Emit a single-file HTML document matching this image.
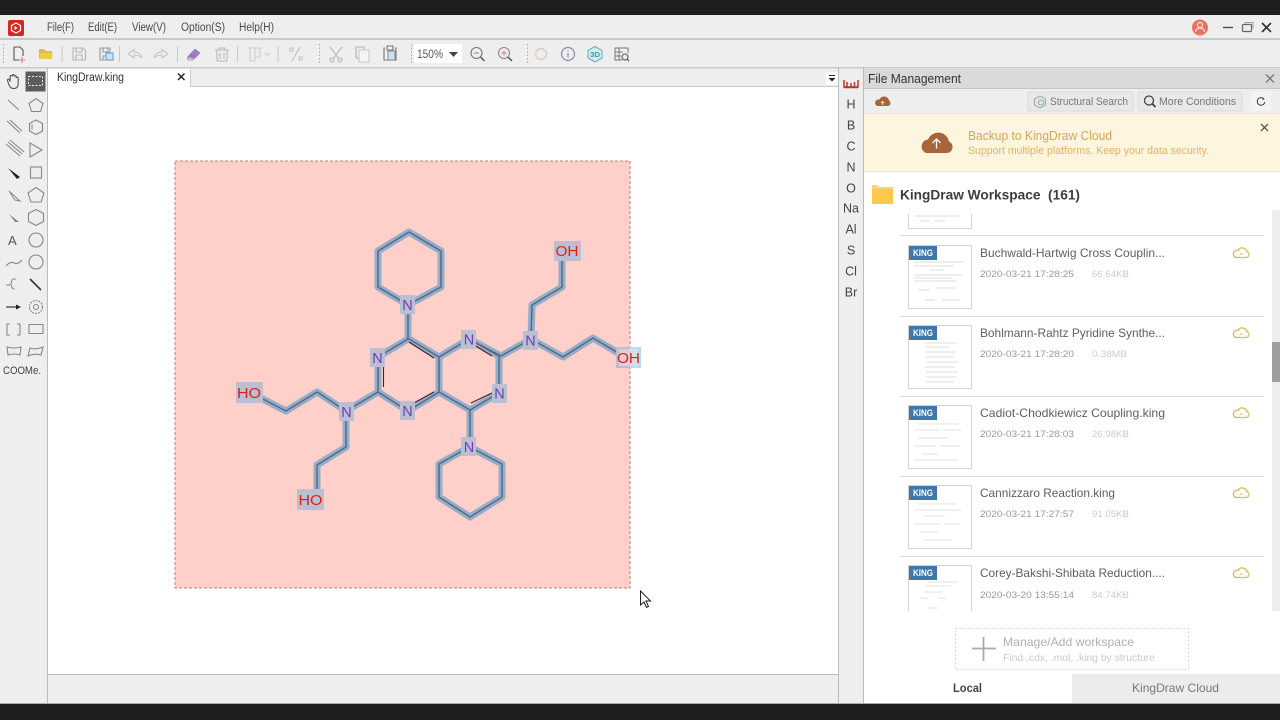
<!DOCTYPE html>
<html lang="en">
<head>
<meta charset="utf-8">
<title>KingDraw</title>
<style>
html,body{margin:0;padding:0;width:1280px;height:720px;overflow:hidden;background:#1e1e1e}
svg{display:block;filter:blur(.35px)}
text{font-family:"Liberation Sans","Noto Sans CJK SC",sans-serif;fill:#444}
.m{font-size:11.5px;fill:#4a4a4a}
.e{font-size:12.5px;fill:#444;text-anchor:middle}
.n{font-size:12px;fill:#5e5e5e}
.d{font-size:9.5px;fill:#999}
.s{font-size:9.5px;fill:#ccc}
.k{font-size:9px;fill:#fff;font-weight:bold}
.ic{fill:none;stroke:#888;stroke-width:1.1}
.ib{fill:none;stroke:#b5b5b5;stroke-width:1.1}
.h1{fill:none;stroke:#93aecb;stroke-width:7;stroke-linecap:round;stroke-linejoin:round}
.b1{fill:none;stroke:#5a687e;stroke-width:1.5;stroke-linecap:round;stroke-linejoin:round}
.lb{fill:#bcbfd2}
.N{font-size:14.5px;fill:#6a3fb0;text-anchor:middle}
.O{font-size:15px;fill:#e0201a;text-anchor:middle}
</style>
</head>
<body>
<svg width="1280" height="720" viewBox="0 0 1280 720" xmlns="http://www.w3.org/2000/svg">
<defs>
<clipPath id="lc"><rect x="864" y="214" width="408" height="397"/></clipPath>
<g id="cl"><path d="M-5 4.500h10a3 3 0 0 0 .8-5.900a4.600 4.600 0 0 0-8.600-1.200a3.600 3.600 0 0 0-2.200 7.100z" fill="none" stroke="#dfb665" stroke-width="1.300"/><path d="M-1.200 1h2.400" stroke="#dfb665" stroke-width="1.200"/></g>
<g id="kg"><rect x=".5" y=".5" width="63" height="63" fill="#fff" stroke="#d2d2d2"/><rect x="1" y="1" width="28" height="14" fill="#3f78a8"/><text x="5" y="11" class="k" textLength="20" lengthAdjust="spacingAndGlyphs">KING</text></g>
</defs>

<!-- frame -->
<rect width="1280" height="720" fill="#1e1e1e"/>
<rect y="15" width="1280" height="689" fill="#eeeeee"/>
<rect y="38" width="1280" height="2" fill="#c9c9c9"/>
<rect y="67" width="1280" height="1.500" fill="#c9c9c9"/>

<!-- logo -->
<rect x="8" y="20" width="16" height="16" rx="2" fill="#d7261e"/>
<path d="M16 23l4.500 2.500v5l-4.500 2.500l-4.500-2.500v-5z" fill="none" stroke="#fff" stroke-width="1.200"/>
<path d="M14.500 26l3 2l-3 2z" fill="#fff"/>

<!-- menu -->
<text x="47" y="31" class="m" textLength="27" lengthAdjust="spacingAndGlyphs">File(F)</text>
<text x="88" y="31" class="m" textLength="29" lengthAdjust="spacingAndGlyphs">Edit(E)</text>
<text x="132" y="31" class="m" textLength="34" lengthAdjust="spacingAndGlyphs">View(V)</text>
<text x="181" y="31" class="m" textLength="44" lengthAdjust="spacingAndGlyphs">Option(S)</text>
<text x="239" y="31" class="m" textLength="35" lengthAdjust="spacingAndGlyphs">Help(H)</text>

<!-- window controls -->
<circle cx="1200" cy="27.500" r="8" fill="#e8735f"/>
<circle cx="1200" cy="25" r="2.500" fill="none" stroke="#fff" stroke-width="1"/>
<path d="M1195.500 32a4.500 4 0 0 1 9 0" fill="none" stroke="#fff" stroke-width="1"/>
<path d="M1223 27.500h10" stroke="#444" stroke-width="1.300"/>
<rect x="1242.500" y="24.500" width="9" height="7" rx="1" fill="none" stroke="#666" stroke-width="1.200"/>
<path d="M1245 24v-1.500h8v6" fill="none" stroke="#888" stroke-width=".8"/>
<path d="M1262 23l9 9M1271 23l-9 9" stroke="#333" stroke-width="1.600"/>

<!-- toolbar -->
<path d="M3.500 44v20M319.500 44v20M411.500 44v20M527.500 44v20" stroke="#aaa" stroke-dasharray="1.500 2"/>
<path d="M62 46v16M119.500 46v16M177.500 46v16M237.500 46v16M278 46v16" stroke="#c8c8c8"/>
<path d="M14 47h6l3 3v6M14 47v13h5" fill="none" stroke="#555" stroke-width="1.100"/>
<path d="M19 60h6M22 57v6" stroke="#e88068" stroke-width="1.100"/>
<path d="M39 49h5l1.500 2h6.500v8h-13z" fill="#e2bc35"/>
<path d="M39 59l1.500-6h12.500l-1.500 6z" fill="#efcb47"/>
<path d="M73 48h10l2.500 2.500v9.500h-12.500z" class="ib"/><path d="M76 48v4h6v-4M76 60v-5h6v5" class="ib"/>
<path d="M100 48h10v5M100 48v12h5M103 48v4h5v-4M103 60v-4h3" fill="none" stroke="#999" stroke-width="1.100"/>
<rect x="106" y="53" width="7" height="7" fill="#cfe2f2" stroke="#4f9bd1"/>
<path d="M128 54l6-4.500v2.500c4 0 7 2 8 6c-2-2.500-4.500-3-8-3v3z" fill="none" stroke="#c4c4c4" stroke-width="1.100"/>
<path d="M168 54l-6-4.500v2.500c-4 0-7 2-8 6c2-2.500 4.500-3 8-3v3z" fill="none" stroke="#c4c4c4" stroke-width="1.100"/>
<path d="M187 57l8-8.500l5.500 4.500l-8 8h-3.500l-2-2z" fill="#9d7cc6"/>
<path d="M187 57l2 4h3.500l2-2z" fill="#cdbbe2"/>
<path d="M215 50h14M219 50v-2h6v2M217 50v11h10v-11M220 53v6M224 53v6" fill="none" stroke="#b8b8b8" stroke-width="1.100"/>
<path d="M248 48h14M250 48v13h5v-13M255 48v9h5v-9" fill="none" stroke="#cdcdcd" stroke-width="1.100"/>
<path d="M265 53l2.500 2.500l2.500-2.500" fill="none" stroke="#cdcdcd"/>
<path d="M300 47l-8 14M290 48h3v3h-3zM299 57h3v3h-3z" fill="none" stroke="#bdbdbd" stroke-width="1"/>
<path d="M330 47l9 12M342 47l-9 12" stroke="#b8b8b8" stroke-width="1.100"/>
<circle cx="332" cy="60" r="2" class="ib"/><circle cx="340" cy="60" r="2" class="ib"/>
<path d="M356 47h8v3M356 47v11h3" class="ib"/><rect x="359" y="50" width="10" height="12" fill="#f4f4f4" stroke="#c8c8c8"/>
<path d="M385 48h-1v12h12v-12h-1M387 46h6v4h-6z" fill="none" stroke="#777" stroke-width="1.100"/>
<rect x="388" y="51" width="7" height="9" fill="#cde2ee" stroke="#777" stroke-width=".8"/>
<rect x="414" y="44" width="48" height="19" fill="#fff"/>
<text x="417" y="58" class="m" textLength="26" lengthAdjust="spacingAndGlyphs" style="fill:#555">150%</text>
<path d="M449 52h9l-4.500 5z" fill="#444"/>
<circle cx="476.500" cy="53" r="5.500" fill="none" stroke="#777" stroke-width="1.100"/><path d="M480.500 57l4 4" stroke="#555" stroke-width="1.400"/><path d="M474 53h5" stroke="#888"/>
<circle cx="504" cy="53" r="5.500" fill="none" stroke="#888" stroke-width="1.100"/><path d="M508 57l4 4" stroke="#555" stroke-width="1.400"/><path d="M501.500 53h5M504 50.500v5" stroke="#c77" stroke-width=".9"/>
<circle cx="541" cy="54" r="5.500" fill="none" stroke="#dcc7d0" stroke-width="1.500"/>
<path d="M541 48.500a5.500 5.500 0 0 1 5.500 5.500" fill="none" stroke="#c2e0bd" stroke-width="1.500"/>
<path d="M536 52a5.500 5.500 0 0 0 3 7.300" fill="none" stroke="#e9dca0" stroke-width="1.500"/>
<circle cx="568" cy="54" r="6.500" fill="none" stroke="#8d86bd" stroke-width="1.200"/><path d="M568 53v4.500M568 50.500v1" stroke="#8d86bd" stroke-width="1.200"/>
<path d="M595 46.500l7 4v7.500l-7 4l-7-4v-7.500z" fill="#d6ebef" stroke="#6fb0c0" stroke-width="1.100"/>
<text x="590" y="57" style="font-size:7px;font-weight:bold;fill:#3f97aa" textLength="10" lengthAdjust="spacingAndGlyphs">3D</text>
<path d="M615 48h13v5M615 48v12h7M619 48v12M615 52h8M615 56h6" fill="none" stroke="#777" stroke-width="1"/>
<circle cx="625" cy="57" r="3" fill="none" stroke="#555" stroke-width="1.100"/><path d="M627 59l2 2" stroke="#555" stroke-width="1.200"/>

<!-- tab row & canvas -->
<rect x="48" y="69" width="790" height="18" fill="#eeeeee"/>
<rect x="48" y="87" width="790" height="587" fill="#ffffff"/>
<rect x="48" y="68.500" width="143" height="19" fill="#ffffff"/>
<path d="M190.500 69v18" stroke="#ccc"/>
<path d="M191 86.500h647" stroke="#ccc"/>
<text x="57" y="81" class="m" textLength="67" lengthAdjust="spacingAndGlyphs" style="fill:#333">KingDraw.king</text>
<path d="M178 73.500l6.500 6.500M184.500 73.500l-6.500 6.500" stroke="#222" stroke-width="1.500"/>
<rect x="826" y="72" width="12" height="13" fill="#fff"/>
<path d="M829 75.500h6" stroke="#222" stroke-width="1"/>
<path d="M828.500 78h7l-3.500 3.500z" fill="#222"/>
<path d="M47.500 68v636" stroke="#bbb"/>
<path d="M48 674.500h790" stroke="#bbb"/>
<path d="M838.500 68v636" stroke="#bbb"/>

<!-- selection -->
<rect x="175" y="161" width="455" height="427" fill="#ffcfc9" stroke="#d9736e" stroke-width="1" stroke-dasharray="3 2"/>

<!-- molecule: highlight -->
<g class="h1">
<path d="M409 232L441 251V287L408 305L378 287V251Z"/>
<path d="M408 305V339L378 357V392L408 411L439 392V357L409 339M439 392L470 410L499 393V356L469 339L439 357"/>
<path d="M469 339L501 356L531 339L532 305L562 287V255M531 339L563 357L593 338L625 357"/>
<path d="M378 392L346 411L317 392L286 411L249 392M346 411V447L317 465V495"/>
<path d="M470 410V447L502 464V497L470 517L439 497V464L469 447"/>
</g>
<!-- molecule: bonds -->
<g class="b1">
<path d="M409 232L441 251V287L408 305L378 287V251Z"/>
<path d="M408 305V339L378 357V392L408 411L439 392V357L409 339M439 392L470 410L499 393V356L469 339L439 357"/>
<path d="M469 339L501 356L531 339L532 305L562 287V255M531 339L563 357L593 338L625 357"/>
<path d="M378 392L346 411L317 392L286 411L249 392M346 411V447L317 465V495"/>
<path d="M470 410V447L502 464V497L470 517L439 497V464L469 447"/>
</g>
<g fill="none" stroke="#4a1f24" stroke-width="1.100">
<path d="M409 342L434 358M383.500 366V387M412 404L434 392M474 345L492 356M471 403L492 393"/>
</g>
<!-- molecule labels -->
<rect x="400" y="295" width="15" height="19" class="lb"/>
<rect x="370" y="348" width="15" height="19" class="lb"/>
<rect x="400" y="401" width="15" height="19" class="lb"/>
<rect x="461" y="330" width="15" height="19" class="lb"/>
<rect x="492" y="384" width="15" height="19" class="lb"/>
<rect x="523" y="331" width="15" height="19" class="lb"/>
<rect x="339" y="402" width="15" height="19" class="lb"/>
<rect x="461" y="437" width="15" height="19" class="lb"/>
<rect x="236" y="382" width="27" height="21" class="lb"/>
<rect x="297" y="489" width="27" height="21" class="lb"/>
<rect x="554" y="241" width="27" height="20" class="lb"/>
<rect x="616" y="347" width="25" height="21" fill="#b5ddf2"/>
<rect x="616" y="347" width="14" height="21" class="lb"/>
<rect x="619" y="349" width="19" height="17" fill="#ffd8d4" opacity=".55"/>
<text x="407.500" y="310" class="N">N</text>
<text x="377.500" y="363" class="N">N</text>
<text x="407.500" y="416" class="N">N</text>
<text x="469" y="344.500" class="N">N</text>
<text x="499.500" y="398.500" class="N">N</text>
<text x="530.500" y="345.500" class="N">N</text>
<text x="346.500" y="417" class="N">N</text>
<text x="469" y="452" class="N">N</text>
<text x="249" y="398" class="O" textLength="24" lengthAdjust="spacingAndGlyphs">HO</text>
<text x="310.500" y="505" class="O" textLength="24" lengthAdjust="spacingAndGlyphs">HO</text>
<text x="567" y="256" class="O" textLength="23" lengthAdjust="spacingAndGlyphs">OH</text>
<text x="628.500" y="363" class="O" textLength="23" lengthAdjust="spacingAndGlyphs">OH</text>

<!-- cursor -->
<path d="M640.500 591v14l3.500-3l2.500 5.500l2-1l-2.500-5.500h4.500z" fill="#fff" stroke="#222" stroke-width="1"/>

<!-- left tools -->
<rect x="25.500" y="71.500" width="20" height="20" fill="#5c5c5c"/>
<rect x="28.500" y="76.500" width="14" height="9" fill="none" stroke="#e6e6e6" stroke-dasharray="2 1.500"/>
<path d="M9 85l-1.500-4.500c-.5-1.500 1.500-2 2-.5l.7 1.500v-5c0-1.300 2-1.300 2 0v-1c0-1.300 2-1.300 2 0v1c0-1.300 2-1.300 2 0v1.500c0-1.300 2-1 2 .2v5.300c0 3-1.500 5-4.500 5c-2.500 0-3.500-1-4.700-3.500z" fill="none" stroke="#555" stroke-width="1.100"/>
<g class="ic">
<path d="M8 100l11 10"/>
<path d="M36 98.500l7 5l-2.500 8h-9l-2.500-8z"/>
<path d="M7 121l13 12M10 120l12 11"/>
<path d="M36 120l6.500 3.500v7.500l-6.500 3.500l-6.500-3.500v-7.500zM32 124.500v5"/>
<path d="M6 144l14 12M8 142l14 12M10 140l14 12"/>
<path d="M30 143l12 7l-12 7z"/>
<rect x="30.500" y="167" width="11" height="11"/>
<path d="M36 187.500l8 5.500l-3 9h-10l-3-9z"/>
<path d="M36 209.500l7.500 4v8l-7.500 4l-7.500-4v-8z"/>
<circle cx="36" cy="240" r="7"/>
<circle cx="36" cy="262" r="7"/>
<path d="M29 324.500h14v9h-14z"/>
<circle cx="36" cy="307" r="6.500" stroke-dasharray="2 1"/>
<circle cx="36" cy="307" r="2.500"/>
<path d="M7 347q7 2 14 0l-1 8q-6-2-12 0z"/>
<path d="M30 348q6 2 13-1l-2 8q-6-2-13 1z"/>
<path d="M10 324h-3v11h3M17 324h3v11h-3"/>
<path d="M6 266q4-5 8-3t8-3"/>
<path d="M6 285h3q2 0 2.500-3t1.500-3h3M11.500 285q0 4 3 4"/>
</g>
<path d="M8 168l12 9l-3 2z" fill="#222"/>
<path d="M9 191l11 10l-5-1z" fill="none" stroke="#888"/>
<path d="M9 214l10 8l-4 0z" fill="#888"/>
<text x="8" y="245" style="font-size:13px;fill:#555">A</text>
<path d="M30 279l11 11" stroke="#333" stroke-width="1.600"/>
<path d="M6 307h10" stroke="#333" stroke-width="1.200"/><path d="M16 304.500l5 2.500l-5 2.500z" fill="#222"/>
<text x="3" y="374" style="font-size:11px;fill:#444" textLength="38" lengthAdjust="spacingAndGlyphs">COOMe.</text>

<!-- element bar -->
<rect x="839" y="69" width="25" height="635" fill="#eeeeee"/>
<path d="M844 80v7h14v-7M847 82v5M851 83v4M854.500 82v5" fill="none" stroke="#b5372f" stroke-width="1.500"/>
<path d="M844 87.500h14" stroke="#b5372f" stroke-width="1.500"/>
<text x="851" y="108.500" class="e">H</text>
<text x="851" y="129.500" class="e">B</text>
<text x="851" y="150.500" class="e">C</text>
<text x="851" y="171.500" class="e">N</text>
<text x="851" y="192.500" class="e">O</text>
<text x="851" y="212.500" class="e">Na</text>
<text x="851" y="233.500" class="e">Al</text>
<text x="851" y="254.500" class="e">S</text>
<text x="851" y="275.500" class="e">Cl</text>
<text x="851" y="296.500" class="e">Br</text>

<!-- right panel -->
<rect x="864" y="69" width="416" height="634" fill="#ffffff"/>
<path d="M863.500 68v636" stroke="#bbb"/>
<rect x="864" y="69" width="416" height="19" fill="#d9d9d9"/>
<path d="M864 88.500h416" stroke="#c4c4c4"/>
<text x="868" y="83" style="font-size:12.500px;fill:#333" textLength="93" lengthAdjust="spacingAndGlyphs">File Management</text>
<path d="M1266 74.500l8 8M1274 74.500l-8 8" stroke="#777" stroke-width="1.300"/>
<rect x="864" y="89" width="416" height="24" fill="#eeeeee"/>
<!-- small cloud -->
<path d="M877 107h11a3 3 0 0 0 1-5.500a5 5 0 0 0-9.500-1a3.500 3.500 0 0 0-2.500 6.500z" fill="#a8653a" transform="translate(0 -1)"/>
<path d="M882.500 105v-3.500M881 103l1.500-1.500l1.500 1.500" fill="none" stroke="#fff" stroke-width=".8"/>
<!-- search buttons -->
<rect x="1028" y="92" width="105" height="19" rx="1" fill="#e8e8e8" stroke="#dcdcdc"/>
<rect x="1138" y="92" width="104" height="19" rx="1" fill="#e8e8e8" stroke="#dcdcdc"/>
<rect x="1251" y="92" width="20" height="19" fill="#f3f3f3"/>
<path d="M1040 96l5.500 3v6l-5.500 3l-5.500-3v-6z" fill="none" stroke="#aaa" stroke-width="1.200"/>
<circle cx="1041" cy="102.500" r="2.500" fill="none" stroke="#7aa" stroke-width="1"/>
<text x="1050" y="105" style="font-size:11px;fill:#777" textLength="78" lengthAdjust="spacingAndGlyphs">Structural Search</text>
<circle cx="1149" cy="100.500" r="4.500" fill="none" stroke="#444" stroke-width="1.300"/>
<path d="M1152.500 104l3 3" stroke="#333" stroke-width="1.600"/>
<text x="1159" y="105" style="font-size:11px;fill:#777" textLength="77" lengthAdjust="spacingAndGlyphs">More Conditions</text>
<path d="M1264 99a3.800 3.800 0 1 0 .8 3" fill="none" stroke="#444" stroke-width="1"/>
<path d="M1263 97.500l1.500 2l-2.200.5z" fill="#444"/>
<!-- banner -->
<rect x="864" y="113" width="416" height="58" fill="#fdf5dd"/>
<path d="M864 113.500h416M864 171.500h416" stroke="#eee5cc"/>
<path d="M926 153h21a6 6 0 0 0 2-11.500a11 11 0 0 0-21-2a7 7 0 0 0-2 13.500z" fill="#a8653a"/>
<path d="M936.500 148.500v-9M932.500 143l4-4l4 4" fill="none" stroke="#fff" stroke-width="1.300"/>
<text x="968" y="140" style="font-size:12.500px;fill:#d8a655" textLength="144" lengthAdjust="spacingAndGlyphs">Backup to KingDraw Cloud</text>
<text x="968" y="154" style="font-size:11px;fill:#e0b366" textLength="241" lengthAdjust="spacingAndGlyphs">Support multiple platforms. Keep your data security.</text>
<path d="M1261 124l7 7M1268 124l-7 7" stroke="#555" stroke-width="1.300"/>
<!-- workspace -->
<path d="M872 185h5.500l1.500 2h14v17h-21z" fill="#fbd375"/>
<path d="M872 189h21v15h-21z" fill="#fdc84e"/>
<text x="900" y="199.500" style="font-size:13.500px;font-weight:bold;fill:#3d3d3d" textLength="180" lengthAdjust="spacingAndGlyphs" xml:space="preserve">KingDraw Workspace  (161)</text>
<!-- scrollbar -->
<rect x="1272" y="210" width="8" height="401" fill="#ededed"/>
<rect x="1272" y="342" width="8" height="40" fill="#9d9d9d"/>

<!-- list -->
<g clip-path="url(#lc)">
<g>
<rect x="908.500" y="165.500" width="63" height="63" fill="#fff" stroke="#d2d2d2"/>
<path d="M915 216h45M920 221h10M935 221h10" stroke="#ddd"/>
<path d="M900 235.500h364" stroke="#dcdcdc"/>
</g>
<!-- item 1 -->
<use href="#kg" x="908" y="245"/>
<path d="M914 262h50M914 266h40M930 270h14M914 275h48M914 278h38M914 281h42M918 290h12M936 288h20M925 300h10M942 300h18" stroke="#dcdcdc" stroke-width=".9"/>
<text x="980" y="257" class="n" textLength="185" lengthAdjust="spacingAndGlyphs">Buchwald-Hartwig Cross Couplin...</text>
<text x="980" y="277" class="d" textLength="94" lengthAdjust="spacingAndGlyphs">2020-03-21 17:28:25</text>
<text x="1092" y="277" class="s" textLength="37" lengthAdjust="spacingAndGlyphs">66.64KB</text>
<use href="#cl" x="1241" y="253"/>
<path d="M900 316.500h364" stroke="#dcdcdc"/>
<!-- item 2 -->
<use href="#kg" x="908" y="325"/>
<path d="M925 343h32M925 347h25M926 352h30M925 357h28M926 362h32M925 367h30M926 372h32M926 377h30M926 382h28" stroke="#dcdcdc" stroke-width="1"/>
<text x="980" y="337" class="n" textLength="185" lengthAdjust="spacingAndGlyphs">Bohlmann-Rahtz Pyridine Synthe...</text>
<text x="980" y="357" class="d" textLength="94" lengthAdjust="spacingAndGlyphs">2020-03-21 17:28:20</text>
<text x="1092" y="357" class="s" textLength="35" lengthAdjust="spacingAndGlyphs">0.38MB</text>
<use href="#cl" x="1241" y="333"/>
<path d="M900 396.500h364" stroke="#dcdcdc"/>
<!-- item 3 -->
<use href="#kg" x="908" y="405"/>
<path d="M918 424h40M915 430h24M943 430h18M918 438h30M914 446h22M940 446h20M922 454h16M914 460h44" stroke="#e2e2e2" stroke-width="1"/>
<text x="980" y="417" class="n" textLength="185" lengthAdjust="spacingAndGlyphs">Cadiot-Chodkiewicz Coupling.king</text>
<text x="980" y="437" class="d" textLength="94" lengthAdjust="spacingAndGlyphs">2020-03-21 17:28:03</text>
<text x="1092" y="437" class="s" textLength="37" lengthAdjust="spacingAndGlyphs">26.98KB</text>
<use href="#cl" x="1241" y="413"/>
<path d="M900 476.500h364" stroke="#dcdcdc"/>
<!-- item 4 -->
<use href="#kg" x="908" y="485"/>
<path d="M918 504h38M915 510h46M925 516h20M914 524h26M944 524h16M920 532h18M924 540h28" stroke="#e2e2e2" stroke-width="1"/>
<text x="980" y="497" class="n" textLength="135" lengthAdjust="spacingAndGlyphs">Cannizzaro Reaction.king</text>
<text x="980" y="517" class="d" textLength="94" lengthAdjust="spacingAndGlyphs">2020-03-21 17:27:57</text>
<text x="1092" y="517" class="s" textLength="37" lengthAdjust="spacingAndGlyphs">91.05KB</text>
<use href="#cl" x="1241" y="493"/>
<path d="M900 556.500h364" stroke="#dcdcdc"/>
<!-- item 5 -->
<use href="#kg" x="908" y="565"/>
<path d="M928 582h30M925 586h26M924 592h18M920 598h8M938 598h8M928 608h10" stroke="#e2e2e2" stroke-width="1"/>
<text x="980" y="577" class="n" textLength="185" lengthAdjust="spacingAndGlyphs">Corey-Bakshi-Shibata Reduction....</text>
<text x="980" y="598" class="d" textLength="94" lengthAdjust="spacingAndGlyphs">2020-03-20 13:55:14</text>
<text x="1092" y="598" class="s" textLength="37" lengthAdjust="spacingAndGlyphs">84.74KB</text>
<use href="#cl" x="1241" y="573"/>
</g>

<!-- manage -->
<rect x="955.500" y="628.500" width="233" height="41" fill="#fff" stroke="#d6d6d6" stroke-dasharray="2 2"/>
<path d="M972 648.500h24M983.500 637v24" stroke="#aaa" stroke-width="1.800"/>
<text x="1003" y="646" style="font-size:12px;fill:#b0b0b0" textLength="131" lengthAdjust="spacingAndGlyphs">Manage/Add workspace</text>
<text x="1003" y="661" style="font-size:10px;fill:#c9c9c9" textLength="152" lengthAdjust="spacingAndGlyphs">Find .cdx, .mol, .king by structure</text>

<!-- bottom tabs -->
<rect x="1072" y="674" width="208" height="29" fill="#ececec"/>
<text x="953" y="692" style="font-size:12px;font-weight:bold;fill:#444" textLength="29" lengthAdjust="spacingAndGlyphs">Local</text>
<text x="1132" y="692" style="font-size:12px;fill:#777" textLength="87" lengthAdjust="spacingAndGlyphs">KingDraw Cloud</text>

<!-- bottom black -->
<rect y="704" width="1280" height="16" fill="#1e1e1e"/>
<path d="M0 703.500h1280" stroke="#aaa"/>
</svg>
</body>
</html>
